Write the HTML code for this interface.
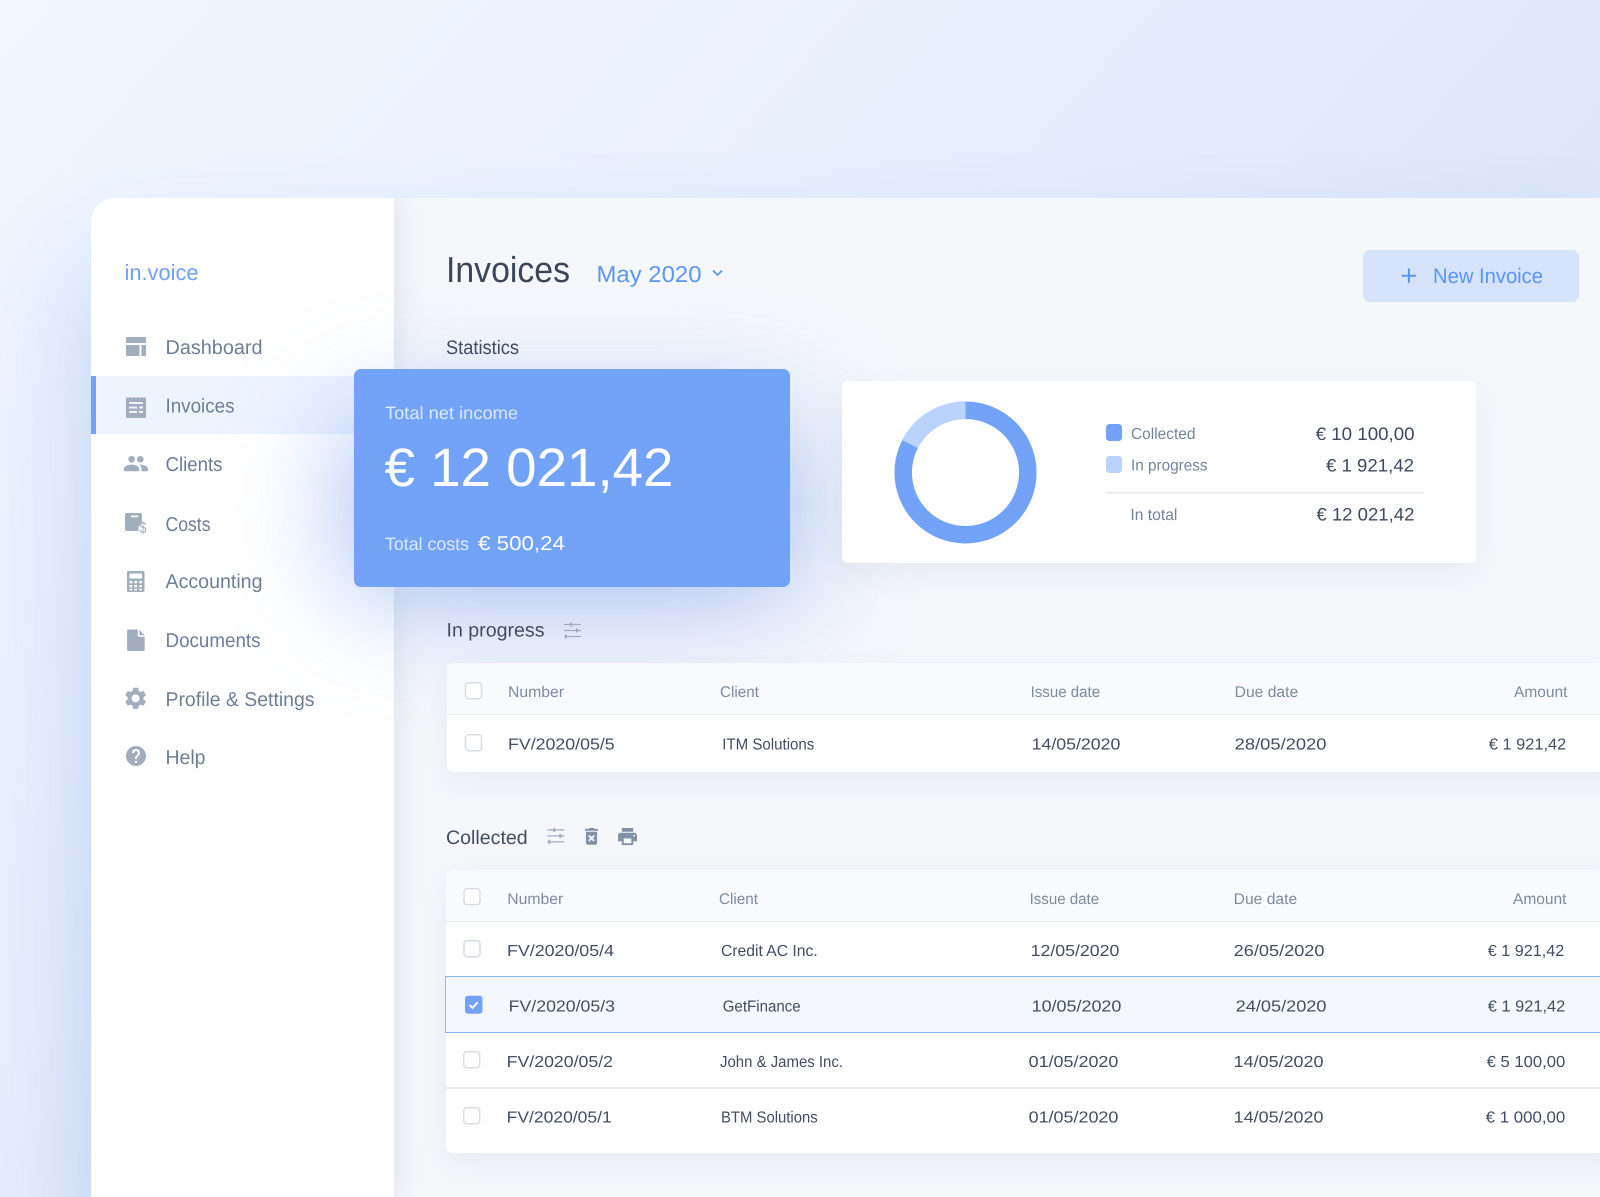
<!DOCTYPE html>
<html lang="en"><head><meta charset="utf-8"><title>in.voice</title>
<style>
html,body{margin:0;padding:0;width:1600px;height:1197px;overflow:hidden;background:#e6eefa}
#root{position:relative;width:1600px;height:1197px;overflow:hidden;
background:linear-gradient(132deg,#f1f7ff 0%,#e8f0fc 35%,#dde8f9 62%,#d0def5 100%)}
.b{position:absolute;box-sizing:border-box}
svg{position:absolute;left:0;top:0;width:1600px;height:1197px}
.soft{filter:blur(.35px)}
text{font-family:"Liberation Sans",sans-serif;white-space:pre;text-rendering:geometricPrecision}
.nav{font-size:20px;fill:#6d7f96}
.h{font-size:19.5px;fill:#414d63}
.th{font-size:15.5px;fill:#7c8ba0}
.td{font-size:16px;fill:#434e63}
.lg{font-size:16px;fill:#74859b}
.v{font-size:18px;fill:#3f4a5e}
.ic{fill:#a2aebd}
.ic2{fill:#8492a6}
</style></head><body><div id="root">
<div class="b" style="left:91px;top:198px;width:1509px;height:999px;border-top-left-radius:24px;box-shadow:0 70px 110px rgba(80,125,215,.3)"></div>
<div class="b" style="left:91px;top:198px;width:1509px;height:999px;background:#f5f7fb;border-top-left-radius:24px;overflow:hidden">
  <div class="b" style="left:0;top:0;width:303px;height:999px;background:#fff;box-shadow:0 0 30px rgba(70,90,140,.15)"></div>
  <div class="b" style="left:0;top:178px;width:303px;height:58px;background:#edf4fe"></div>
  <div class="b" style="left:0;top:178px;width:5px;height:58px;background:#72a3f9"></div>
</div>
<!-- income card shadow -->
<div class="b" style="left:354px;top:425px;width:436px;height:162px;background:rgba(80,130,235,.6);filter:blur(60px)"></div>
<!-- button -->
<div class="b" style="left:1363px;top:250px;width:216px;height:52px;background:#d5e4fb;border-radius:7px"></div>
<!-- donut card -->
<div class="b" style="left:842px;top:381px;width:634px;height:182px;background:#fff;border-radius:6px;box-shadow:0 10px 30px rgba(60,85,130,.07)"></div>
<!-- table 1 -->
<div class="b" style="left:447px;top:663px;width:1180px;height:109px;background:#fff;border-radius:6px;box-shadow:0 10px 30px rgba(60,85,130,.07);overflow:hidden">
  <div class="b" style="left:0;top:0;width:100%;height:52px;background:#f9fafd;border-bottom:1.5px solid #e8ebf0"></div>
</div>
<!-- table 2 -->
<div class="b" style="left:446px;top:870px;width:1180px;height:283px;background:#fff;border-radius:6px;box-shadow:0 10px 30px rgba(60,85,130,.07);overflow:hidden">
  <div class="b" style="left:0;top:0;width:100%;height:52px;background:#f9fafd;border-bottom:1.5px solid #e8ebf0"></div>
  <div class="b" style="left:0;top:217px;width:100%;height:1.5px;background:#e8ebf0"></div>
</div>
<div class="b" style="left:445px;top:976px;width:1200px;height:57px;background:#f4f8fe;border:1.5px solid #8db5f8"></div>

<svg class="soft" viewBox="0 0 1600 1197">
<text x="124.500" y="280" font-size="22" fill="#6ea0f7" textLength="74" lengthAdjust="spacingAndGlyphs">in.voice</text>

<text class="nav" x="165.500" y="354" textLength="97" lengthAdjust="spacingAndGlyphs">Dashboard</text>
<text class="nav" x="165.500" y="412.500" textLength="69" lengthAdjust="spacingAndGlyphs">Invoices</text>
<text class="nav" x="165.500" y="471" textLength="57" lengthAdjust="spacingAndGlyphs">Clients</text>
<text class="nav" x="165.500" y="531" textLength="45" lengthAdjust="spacingAndGlyphs">Costs</text>
<text class="nav" x="165.500" y="588" textLength="97" lengthAdjust="spacingAndGlyphs">Accounting</text>
<text class="nav" x="165.500" y="647" textLength="95" lengthAdjust="spacingAndGlyphs">Documents</text>
<text class="nav" x="165.500" y="706" textLength="149" lengthAdjust="spacingAndGlyphs">Profile &amp; Settings</text>
<text class="nav" x="165.500" y="764" textLength="40" lengthAdjust="spacingAndGlyphs">Help</text>

<!-- nav icons -->
<g class="ic">
<path d="M127.500 337h17a1.500 1.500 0 0 1 1.500 1.500v4.500h-20v-4.500a1.500 1.500 0 0 1 1.500-1.500zM126 345h13.500v11h-12a1.500 1.500 0 0 1-1.500-1.500zM141.500 345h4.500v9.500a1.500 1.500 0 0 1-1.500 1.500h-3z"/>
<path fill-rule="evenodd" d="M126 397l2 1 2-1 2 1 2-1 2 1 2-1 2 1 2-1 2 1 2-1v20a1 1 0 0 1-1 1h-18a1 1 0 0 1-1-1zM129 402v2h14v-2zM129 406.500v2h8v-2zM139 406.500v2h4v-2zM129 411v2h8v-2zM139 411v2h4v-2z"/>
<path transform="translate(122.900,450.500) scale(1.090)" d="M16 11c1.660 0 2.990-1.340 2.990-3S17.660 5 16 5c-1.660 0-3 1.340-3 3s1.340 3 3 3zm-8 0c1.660 0 2.990-1.340 2.990-3S9.660 5 8 5C6.340 5 5 6.340 5 8s1.340 3 3 3zm0 2c-2.330 0-7 1.170-7 3.500V19h14v-2.500c0-2.330-4.670-3.500-7-3.500zm8 0c-.29 0-.62.02-.97.05 1.160.84 1.970 1.970 1.970 3.450V19h6v-2.500c0-2.330-4.670-3.500-7-3.500z"/>
<path fill-rule="evenodd" d="M127 513h13a2 2 0 0 1 2 2v8.500c-2.500.5-3.500 2.500-3.500 7.500h-11.500a2 2 0 0 1-2-2v-14a2 2 0 0 1 2-2zM131 515.500v1.800h7v-1.800z"/>
<path fill-rule="evenodd" d="M128.500 571h14.500a1.500 1.500 0 0 1 1.500 1.500v18a1.500 1.500 0 0 1-1.500 1.500h-14.500a1.500 1.500 0 0 1-1.500-1.500v-18a1.500 1.500 0 0 1 1.500-1.500zM129.500 573.500v5h12.500v-5zM129.500 581v2.200h2.800v-2.200zM134.300 581v2.200h2.800v-2.200zM139.200 581v2.200h2.800v-2.200zM129.500 585v2.200h2.800v-2.200zM134.300 585v2.200h2.800v-2.200zM139.200 585v2.200h2.800v-2.200zM129.500 588.800v1.600h2.800v-1.600zM134.300 588.800v1.600h2.800v-1.600zM139.200 588.800v1.600h2.800v-1.600z"/>
<path d="M129 629.500h8.800v6.200a1 1 0 0 0 1 1h5.900v12.500a1.800 1.800 0 0 1-1.800 1.800h-14a1.800 1.800 0 0 1-1.800-1.800v-18a1.800 1.800 0 0 1 1.800-1.800zM139.300 629.800l5.300 5.400h-5.300z"/>
<path transform="translate(135.600,698.300) scale(1.100) translate(-12,-12)" d="M19.140 12.940c.04-.3.06-.61.06-.94 0-.32-.02-.64-.07-.94l2.030-1.580c.18-.14.23-.41.12-.61l-1.920-3.320c-.12-.22-.37-.29-.59-.22l-2.390.96c-.5-.38-1.030-.7-1.620-.94l-.36-2.540c-.04-.24-.24-.41-.48-.41h-3.840c-.24 0-.43.17-.47.41l-.36 2.540c-.59.24-1.130.57-1.620.94l-2.390-.96c-.22-.08-.47 0-.59.22L2.740 8.870c-.12.21-.08.47.12.61l2.030 1.580c-.05.3-.09.63-.09.94s.02.64.07.94l-2.030 1.580c-.18.14-.23.41-.12.61l1.920 3.320c.12.22.37.29.59.22l2.390-.96c.5.38 1.030.7 1.620.94l.36 2.540c.05.24.24.41.48.41h3.840c.24 0 .44-.17.47-.41l.36-2.540c.59-.24 1.130-.56 1.620-.94l2.390.96c.22.08.47 0 .59-.22l1.920-3.320c.12-.22.07-.47-.12-.61l-2.010-1.580zM12 15.600c-1.980 0-3.600-1.620-3.600-3.600s1.620-3.600 3.600-3.600 3.600 1.620 3.600 3.600-1.620 3.600-3.600 3.600z"/>
<path transform="translate(124,744)" d="M12 2C6.480 2 2 6.480 2 12s4.480 10 10 10 10-4.480 10-10S17.520 2 12 2zm1 17h-2v-2h2v2zm2.070-7.750l-.9.92C13.450 12.900 13 13.500 13 15h-2v-.5c0-1.100.45-2.100 1.170-2.830l1.240-1.260c.37-.36.59-.86.59-1.410 0-1.100-.9-2-2-2s-2 .9-2 2H8c0-2.210 1.790-4 4-4s4 1.790 4 4c0 .88-.36 1.680-.93 2.250z"/>
</g>
<text x="139.500" y="533" font-size="16" fill="#a2aebd" textLength="7" lengthAdjust="spacingAndGlyphs">$</text>

<!-- header -->
<text x="446" y="282" font-size="36" fill="#3c4659" textLength="124" lengthAdjust="spacingAndGlyphs">Invoices</text>
<text x="596.500" y="282" font-size="23" fill="#5b95f5" textLength="105" lengthAdjust="spacingAndGlyphs">May 2020</text>
<path d="M713 270.500l4.500 4.500 4.500-4.500" fill="none" stroke="#5b95f5" stroke-width="1.800"/>
<path d="M1401.700 275.700h14.300M1408.900 268.500v14.400" fill="none" stroke="#5b95f5" stroke-width="2"/>
<text x="1433" y="283" font-size="21" fill="#5b95f5" textLength="110" lengthAdjust="spacingAndGlyphs">New Invoice</text>
<text class="h" x="446" y="354" textLength="73" lengthAdjust="spacingAndGlyphs">Statistics</text>

<!-- donut -->
<circle cx="965.500" cy="472.500" r="62.300" fill="none" stroke="#72a3f9" stroke-width="17.500"/>
<path d="M965.500 410.200A62.300 62.300 0 0 0 910 444.200" fill="none" stroke="#b9d3fd" stroke-width="17.500"/>
<rect x="1106" y="424" width="16" height="17" rx="3.500" fill="#72a3f9"/>
<rect x="1106" y="456" width="16" height="17" rx="3.500" fill="#b9d3fd"/>
<text class="lg" x="1131" y="439" textLength="64.500" lengthAdjust="spacingAndGlyphs">Collected</text>
<text class="lg" x="1131" y="470.500" textLength="76.500" lengthAdjust="spacingAndGlyphs">In progress</text>
<text class="v" x="1315.600" y="440" textLength="99" lengthAdjust="spacingAndGlyphs">€ 10 100,00</text>
<text class="v" x="1326" y="471.500" textLength="88" lengthAdjust="spacingAndGlyphs">€ 1 921,42</text>
<rect x="1106" y="492" width="318" height="1.500" fill="#e6e8ec"/>
<text class="lg" x="1130.400" y="520" textLength="47" lengthAdjust="spacingAndGlyphs">In total</text>
<text class="v" x="1316.400" y="520.500" textLength="98" lengthAdjust="spacingAndGlyphs">€ 12 021,42</text>

<!-- in progress -->
<text class="h" x="446.500" y="636.500" textLength="98" lengthAdjust="spacingAndGlyphs">In progress</text>
<g fill="none" stroke="#a2aebd">
<path stroke-width="1.300" d="M564 624.500h17M564 630.500h17M564 636.500h17"/>
<path stroke-width="2" d="M571 622.500v4M577 628.500v4M566 634.500v4"/>
</g>
<text class="th" x="508" y="697" textLength="56" lengthAdjust="spacingAndGlyphs">Number</text>
<text class="th" x="720" y="697" textLength="39" lengthAdjust="spacingAndGlyphs">Client</text>
<text class="th" x="1030.600" y="697" textLength="69.500" lengthAdjust="spacingAndGlyphs">Issue date</text>
<text class="th" x="1234.700" y="697" textLength="63.500" lengthAdjust="spacingAndGlyphs">Due date</text>
<text class="th" x="1514" y="697" textLength="53.500" lengthAdjust="spacingAndGlyphs">Amount</text>
<text class="td" x="508" y="749.500" textLength="106.700" lengthAdjust="spacingAndGlyphs">FV/2020/05/5</text>
<text class="td" x="722.300" y="749.500" textLength="92" lengthAdjust="spacingAndGlyphs">ITM Solutions</text>
<text class="td" x="1031.600" y="749.500" textLength="88.800" lengthAdjust="spacingAndGlyphs">14/05/2020</text>
<text class="td" x="1234.700" y="749.500" textLength="91.800" lengthAdjust="spacingAndGlyphs">28/05/2020</text>
<text class="td" x="1488.800" y="749.500" textLength="77.500" lengthAdjust="spacingAndGlyphs">€ 1 921,42</text>

<!-- collected -->
<text class="h" x="446" y="844" textLength="81.700" lengthAdjust="spacingAndGlyphs">Collected</text>
<g transform="translate(-16.700,205.400)" fill="none" stroke="#a2aebd">
<path stroke-width="1.300" d="M564 624.500h17M564 630.500h17M564 636.500h17"/>
<path stroke-width="2" d="M571 622.500v4M577 628.500v4M566 634.500v4"/>
</g>
<path class="ic2" transform="translate(580.350,825.200) scale(.93)" d="M6 19c0 1.100.9 2 2 2h8c1.100 0 2-.9 2-2V7H6v12zm2.460-7.120l1.410-1.410L12 12.590l2.120-2.120 1.410 1.410L13.410 14l2.120 2.120-1.410 1.410L12 15.410l-2.120 2.120-1.410-1.410L10.590 14l-2.130-2.120zM15.500 4l-1-1h-5l-1 1H5v2h14V4z"/>
<path class="ic2" transform="translate(616.100,825.150) scale(.95)" d="M19 8H5c-1.660 0-3 1.340-3 3v6h4v4h12v-4h4v-6c0-1.660-1.340-3-3-3zm-3 11H8v-5h8v5zm3-7c-.55 0-1-.45-1-1s.45-1 1-1 1 .45 1 1-.45 1-1 1zm-1-9H6v4h12V3z"/>

<text class="th" x="507.300" y="904" textLength="56" lengthAdjust="spacingAndGlyphs">Number</text>
<text class="th" x="719" y="904" textLength="39" lengthAdjust="spacingAndGlyphs">Client</text>
<text class="th" x="1029.600" y="904" textLength="69.500" lengthAdjust="spacingAndGlyphs">Issue date</text>
<text class="th" x="1233.700" y="904" textLength="63.500" lengthAdjust="spacingAndGlyphs">Due date</text>
<text class="th" x="1513" y="904" textLength="53.500" lengthAdjust="spacingAndGlyphs">Amount</text>

<text class="td" x="507" y="956" textLength="107" lengthAdjust="spacingAndGlyphs">FV/2020/05/4</text>
<text class="td" x="721" y="956" textLength="96.700" lengthAdjust="spacingAndGlyphs">Credit AC Inc.</text>
<text class="td" x="1030.600" y="956" textLength="88.800" lengthAdjust="spacingAndGlyphs">12/05/2020</text>
<text class="td" x="1233.700" y="956" textLength="90.800" lengthAdjust="spacingAndGlyphs">26/05/2020</text>
<text class="td" x="1487.800" y="956" textLength="76.500" lengthAdjust="spacingAndGlyphs">€ 1 921,42</text>

<text class="td" x="508.700" y="1011.500" textLength="106.300" lengthAdjust="spacingAndGlyphs">FV/2020/05/3</text>
<text class="td" x="722.700" y="1011.500" textLength="78" lengthAdjust="spacingAndGlyphs">GetFinance</text>
<text class="td" x="1031.600" y="1011.500" textLength="89.800" lengthAdjust="spacingAndGlyphs">10/05/2020</text>
<text class="td" x="1235.700" y="1011.500" textLength="90.800" lengthAdjust="spacingAndGlyphs">24/05/2020</text>
<text class="td" x="1487.800" y="1011.500" textLength="77.500" lengthAdjust="spacingAndGlyphs">€ 1 921,42</text>

<text class="td" x="506.700" y="1067" textLength="106.300" lengthAdjust="spacingAndGlyphs">FV/2020/05/2</text>
<text class="td" x="720" y="1067" textLength="123" lengthAdjust="spacingAndGlyphs">John &amp; James Inc.</text>
<text class="td" x="1028.600" y="1067" textLength="89.800" lengthAdjust="spacingAndGlyphs">01/05/2020</text>
<text class="td" x="1233.700" y="1067" textLength="89.800" lengthAdjust="spacingAndGlyphs">14/05/2020</text>
<text class="td" x="1486.700" y="1067" textLength="78.600" lengthAdjust="spacingAndGlyphs">€ 5 100,00</text>

<text class="td" x="506.700" y="1122.700" textLength="105" lengthAdjust="spacingAndGlyphs">FV/2020/05/1</text>
<text class="td" x="721" y="1122.700" textLength="96.700" lengthAdjust="spacingAndGlyphs">BTM Solutions</text>
<text class="td" x="1028.600" y="1122.700" textLength="89.800" lengthAdjust="spacingAndGlyphs">01/05/2020</text>
<text class="td" x="1233.700" y="1122.700" textLength="89.800" lengthAdjust="spacingAndGlyphs">14/05/2020</text>
<text class="td" x="1485.700" y="1122.700" textLength="79.600" lengthAdjust="spacingAndGlyphs">€ 1 000,00</text>

<!-- checkboxes -->
<g fill="#fff" stroke="#d9dee6" stroke-width="1.500">
<rect x="465.500" y="682.700" width="16" height="16" rx="3"/>
<rect x="465.500" y="734.700" width="16" height="16" rx="3"/>
<rect x="464" y="888.700" width="16" height="16" rx="3"/>
<rect x="464" y="940.700" width="16" height="16" rx="3"/>
<rect x="463.700" y="1051.700" width="16" height="16" rx="3"/>
<rect x="463.700" y="1107.700" width="16" height="16" rx="3"/>
</g>
<rect x="465" y="995.700" width="17.500" height="18" rx="3" fill="#72a3f9"/>
<path d="M469.500 1005l3 2.800 5.300-5.600" fill="none" stroke="#fff" stroke-width="1.800"/>
</svg>

<!-- income card -->
<div class="b" style="left:354px;top:369px;width:436px;height:218px;background:#72a3f9;border-radius:7px"></div>
<svg class="soft" viewBox="0 0 1600 1197">
<text x="385" y="419" font-size="18" fill="#dce9fe" textLength="133" lengthAdjust="spacingAndGlyphs">Total net income</text>
<text x="384.500" y="486" font-size="54" fill="#fff" textLength="289" lengthAdjust="spacingAndGlyphs">€ 12 021,42</text>
<text x="385" y="550" font-size="18" fill="#dce9fe" textLength="84" lengthAdjust="spacingAndGlyphs">Total costs</text>
<text x="478" y="550" font-size="20" fill="#fff" textLength="87" lengthAdjust="spacingAndGlyphs">€ 500,24</text>
</svg>
</div></body></html>
